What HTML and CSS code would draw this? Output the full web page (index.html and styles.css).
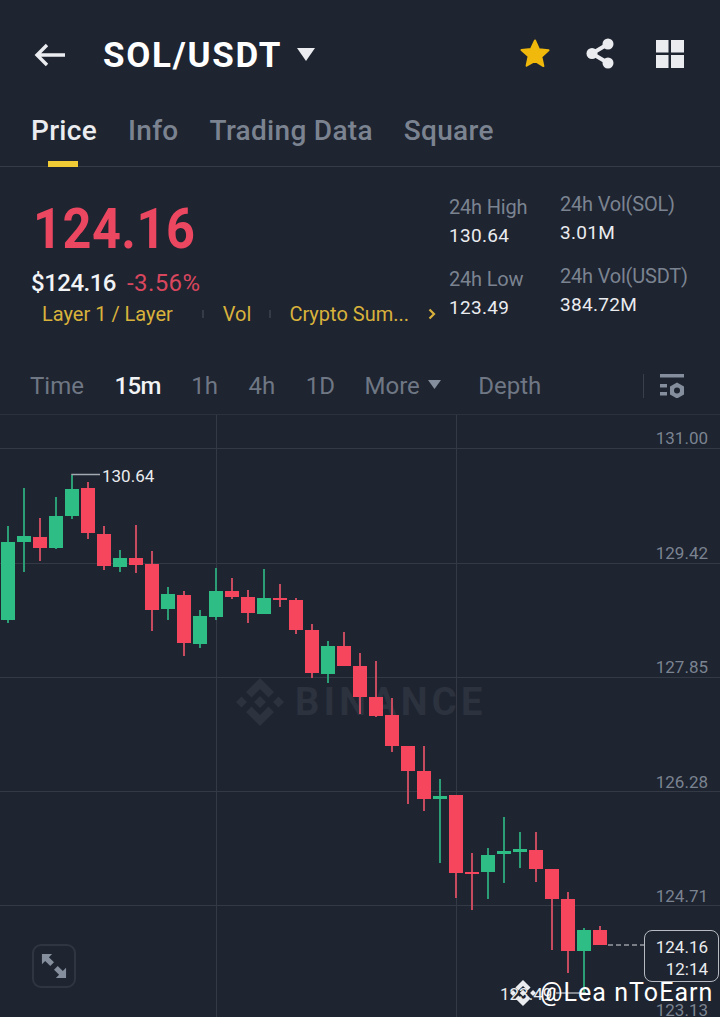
FILE: index.html
```html
<!DOCTYPE html>
<html lang="en">
<head>
  <meta charset="UTF-8">
  <title>SOL/USDT</title>
  <link rel="stylesheet" href="styles.css">
</head>
<body>

  <!-- HEADER -->
  <header class="topbar">
    <svg class="icon-back" width="32" height="24" viewBox="0 0 32 24">
      <path d="M13 2 3 12l10 10M3 12h28" fill="none" stroke="#eaecef" stroke-width="3.4"/>
    </svg>
    <h1 class="pair">SOL/USDT</h1>
    <svg class="icon-caret" width="20" height="14" viewBox="0 0 20 14">
      <path d="M1 1h18L10 14z" fill="#eaecef"/>
    </svg>
    <div class="topbar-actions">
      <svg width="32" height="32" viewBox="0 0 32 32">
        <path d="M16 2.500l4 8.800 9.500 1-7.100 6.400 2 9.400L16 22.900l-8.400 4.800 2-9.400-7.100-6.400 9.500-1z" fill="#f0b90b" stroke="#f0b90b" stroke-width="2" stroke-linejoin="round"/>
      </svg>
      <svg class="icon-share" width="30" height="32" viewBox="0 0 30 32">
        <path d="M22 6 6 15.500 22 25" fill="none" stroke="#eaecef" stroke-width="4"/>
        <circle cx="22" cy="6" r="5.500" fill="#eaecef"/>
        <circle cx="6" cy="15.500" r="5.500" fill="#eaecef"/>
        <circle cx="22" cy="25" r="5.500" fill="#eaecef"/>
      </svg>
      <svg width="28" height="28" viewBox="0 0 28 28">
        <path d="M0 0h12.500v12.500H0zM15 0h13v12.500H15zM0 15h12.500v13H0zM15 15h13v13H15z" fill="#eaecef"/>
      </svg>
    </div>
  </header>

  <!-- TABS -->
  <nav class="tabs">
    <a class="tab tab-active">Price</a>
    <a class="tab">Info</a>
    <a class="tab">Trading Data</a>
    <a class="tab">Square</a>
  </nav>

  <!-- PRICE + 24H STATS -->
  <section class="summary">
    <div class="summary-left">
      <div class="last-price">124.16</div>
      <div class="price-line">
        <span class="fiat">$124.16</span>
        <span class="change">-3.56%</span>
      </div>
      <div class="tags">
        <span class="tag">Layer 1 / Layer</span>
        <i class="tag-sep"></i>
        <span class="tag">Vol</span>
        <i class="tag-sep"></i>
        <span class="tag">Crypto Sum...</span>
        <svg class="tag-more" width="8" height="12" viewBox="0 0 8 12">
          <path d="M1.500 1.500 6 6l-4.500 4.500" fill="none" stroke="#d9b23c" stroke-width="2.200"/>
        </svg>
      </div>
    </div>
    <div class="stats stats-a">
      <div class="stat"><span class="stat-label">24h High</span><span class="stat-value">130.64</span></div>
      <div class="stat"><span class="stat-label">24h Low</span><span class="stat-value">123.49</span></div>
    </div>
    <div class="stats stats-b">
      <div class="stat"><span class="stat-label">24h Vol(SOL)</span><span class="stat-value">3.01M</span></div>
      <div class="stat"><span class="stat-label">24h Vol(USDT)</span><span class="stat-value">384.72M</span></div>
    </div>
  </section>

  <!-- INTERVALS -->
  <div class="intervals">
    <span class="interval">Time</span>
    <span class="interval interval-active">15m</span>
    <span class="interval">1h</span>
    <span class="interval">4h</span>
    <span class="interval">1D</span>
    <span class="interval interval-more">More
      <svg width="13" height="9" viewBox="0 0 13 9"><path d="M0 0h13L6.500 9z" fill="#848e9c"/></svg>
    </span>
    <span class="interval interval-depth">Depth</span>
    <i class="interval-sep"></i>
    <svg class="icon-settings" width="24" height="24" viewBox="0 0 24 24">
      <path d="M0 0h24v3.500H0zM0 10h7v3.500H0zM0 18h7v3.500H0z" fill="#848e9c"/>
      <path fill-rule="evenodd" d="M17 8.500l7 4v8l-7 4-7-4v-8zM17 13.500a3 3 0 1 0 0 6 3 3 0 0 0 0-6z" fill="#848e9c"/>
    </svg>
  </div>

  <!-- CHART -->
  <main class="chart">
    <svg class="chart-svg" width="720" height="602" viewBox="0 415 720 602">
      <defs>
        <symbol id="bnb" viewBox="-24 -24 48 48">
          <path d="M0-24 14-10l-5.500 5.500L0-13l-8.500 8.500L-14-10zM0 24l14-14-5.500-5.500L0 13l-8.500-8.500L-14 10zM-24 0l5.500-5.500L-13 0l-5.500 5.500zM24 0l-5.500-5.500L13 0l5.500 5.500zM0-6l6 6-6 6-6-6z"/>
        </symbol>
      </defs>

      <!-- grid -->
      <path class="grid" d="M0 448.500H720M0 563.500H720M0 677.500H720M0 791.500H720M0 905.500H720M216.500 415V1017M456.500 415V1017"/>

      <!-- watermark -->
      <use href="#bnb" x="236" y="678" width="48" height="48" class="mark"/>
      <text class="mark mark-text" x="295" y="715">BINANCE</text>

      <!-- price axis -->
      <text class="axis" x="708" y="444">131.00</text>
      <text class="axis" x="708" y="559">129.42</text>
      <text class="axis" x="708" y="673">127.85</text>
      <text class="axis" x="708" y="788">126.28</text>
      <text class="axis" x="708" y="902">124.71</text>
      <text class="axis" x="708" y="1016">123.13</text>

      <!-- wicks -->
      <path class="wick-up" d="M8 526V623M24 488V572M56 497V549M72 475V519M120 550V572M168 587V620M200 610V648M216 568V620M264 569V614M328 641V683M440 779V863M488 848V899M504 817V883M520 832V868M584 928V993"/>
      <path class="wick-down" d="M40 518V561M88 482V539M104 526V570M136 525V573M152 551V631M184 591V656M232 578V599M248 590V623M280 584V607M296 598V634M312 624V678M344 632V666M360 653V714M376 661V717M392 698V752M408 746V804M424 746V811M456 795V898M472 853V910M536 832V882M552 869V950M568 892V973M600 926V945"/>

      <!-- bodies -->
      <g class="up">
        <rect x="1" y="542" width="14" height="78"/>
        <rect x="17" y="536" width="14" height="6"/>
        <rect x="49" y="516" width="14" height="32"/>
        <rect x="65" y="489" width="14" height="27"/>
        <rect x="113" y="558" width="14" height="9"/>
        <rect x="161" y="594" width="14" height="15"/>
        <rect x="193" y="616" width="14" height="28"/>
        <rect x="209" y="591" width="14" height="26"/>
        <rect x="257" y="598" width="14" height="16"/>
        <rect x="321" y="646" width="14" height="28"/>
        <rect x="433" y="796" width="14" height="3"/>
        <rect x="481" y="855" width="14" height="17"/>
        <rect x="497" y="851" width="14" height="3"/>
        <rect x="513" y="849" width="14" height="3"/>
        <rect x="577" y="930" width="14" height="21"/>
      </g>
      <g class="down">
        <rect x="33" y="537" width="14" height="11"/>
        <rect x="81" y="488" width="14" height="45"/>
        <rect x="97" y="534" width="14" height="32"/>
        <rect x="129" y="558" width="14" height="7"/>
        <rect x="145" y="564" width="14" height="46"/>
        <rect x="177" y="595" width="14" height="48"/>
        <rect x="225" y="591" width="14" height="6"/>
        <rect x="241" y="597" width="14" height="16"/>
        <rect x="273" y="598" width="14" height="2"/>
        <rect x="289" y="600" width="14" height="30"/>
        <rect x="305" y="630" width="14" height="43"/>
        <rect x="337" y="646" width="14" height="20"/>
        <rect x="353" y="666" width="14" height="31"/>
        <rect x="369" y="697" width="14" height="19"/>
        <rect x="385" y="715" width="14" height="31"/>
        <rect x="401" y="746" width="14" height="25"/>
        <rect x="417" y="771" width="14" height="28"/>
        <rect x="449" y="795" width="14" height="78"/>
        <rect x="465" y="872" width="14" height="2"/>
        <rect x="529" y="850" width="14" height="19"/>
        <rect x="545" y="869" width="14" height="30"/>
        <rect x="561" y="899" width="14" height="52"/>
        <rect x="593" y="930" width="14" height="15"/>
      </g>

      <!-- high marker -->
      <path class="marker" d="M72 475V474.500H100"/>
      <text class="marker-text" x="102" y="482">130.64</text>

      <!-- low marker + last price line -->
      <path class="marker" d="M556 993H586"/>
      <text class="marker-text" x="500" y="1000">123.49</text>
      <path class="last-line" d="M608 945H644"/>
    </svg>

    <div class="price-tag">
      <span>124.16</span>
      <span>12:14</span>
    </div>

    <div class="expand">
      <svg width="26" height="26" viewBox="0 0 28 28">
        <path d="M1 1h11L8.500 4.500 14 10l-4 4-5.500-5.500L1 12zM27 27H16l3.500-3.500L14 18l4-4 5.500 5.500L27 16z" fill="#848e9c"/>
      </svg>
    </div>

    <div class="credit">
      <svg class="credit-logo" width="26" height="26"><use href="#bnb" fill="#eaecef"/></svg>
      <span>@Lea nToEarn</span>
    </div>
  </main>

</body>
</html>
```

FILE: styles.css
```css
body {
  margin: 0;
  width: 720px;
  height: 1017px;
  overflow: hidden;
  background-color: #1e2430;
  font-family: Roboto, "Liberation Sans", sans-serif;
  color: #eaecef;
}

/* header */
.topbar {
  display: flex;
  align-items: center;
  height: 110px;
  padding: 0 36px 0 34px;
  box-sizing: border-box;
}

.icon-back {
  margin-right: 37px;
}

.pair {
  margin: 0;
  font-size: 35px;
  font-weight: 700;
  letter-spacing: 1.700px;
  color: #fff;
}

.icon-caret {
  margin: -2px 0 0 14px;
}

.topbar-actions {
  display: flex;
  align-items: center;
  gap: 35px;
  margin-left: auto;
  margin-top: -2px;
}

.icon-share {
  margin-right: 5px;
}

/* tabs */
.tabs {
  display: flex;
  gap: 31px;
  height: 57px;
  padding-left: 31px;
  box-sizing: border-box;
  border-bottom: 1px solid #363c47;
}

.tab {
  position: relative;
  font-size: 28px;
  line-height: 42px;
  font-weight: 500;
  letter-spacing: 0.3px;
  color: #7b8390;
}

.tab-active {
  color: #eaecef;
}

.tab-active::after {
  content: "";
  position: absolute;
  left: 17px;
  bottom: -1px;
  width: 30px;
  height: 6px;
  background-color: #f0cb35;
}

/* summary */
.summary {
  display: flex;
  height: 193px;
}

.summary-left {
  width: 449px;
  padding-left: 31px;
  box-sizing: border-box;
}

.last-price {
  margin: 31px 0 0 2px;
  font-size: 56px;
  line-height: 62px;
  font-weight: 700;
  letter-spacing: 0.6px;
  color: #ec4760;
  transform: scaleX(0.9);
  transform-origin: left;
}

.price-line {
  display: flex;
  gap: 11px;
  margin-top: 9px;
  font-size: 24px;
  line-height: 28px;
}

.fiat {
  font-weight: 500;
  letter-spacing: -0.5px;
  color: #f2f3f5;
}

.change {
  letter-spacing: 0.4px;
  color: #d8475e;
}

.tags {
  display: flex;
  align-items: center;
  margin: 3px 0 0 11px;
  font-size: 20px;
  line-height: 28px;
  color: #d9b23c;
}

.tag-sep {
  width: 2px;
  height: 8px;
  margin: 0 19px 0 29px;
  background-color: #363c47;
}

.tag-sep + .tag + .tag-sep {
  margin: 0 18px 0 18px;
}

.tag-more {
  margin-left: 19px;
}

.stats {
  display: flex;
  flex-direction: column;
  gap: 18px;
}

.stats-a {
  width: 111px;
  padding-top: 27px;
}

.stats-b {
  padding-top: 24px;
}

.stat {
  display: flex;
  flex-direction: column;
  gap: 4px;
}

.stat-label {
  font-size: 20px;
  line-height: 26px;
  letter-spacing: -0.2px;
  color: #7b8390;
}

.stat-value {
  font-size: 19px;
  line-height: 24px;
  letter-spacing: 0.3px;
  color: #eaecef;
}

/* interval row */
.intervals {
  display: flex;
  align-items: center;
  gap: 30.500px;
  height: 55px;
  padding: 0 36px 2px 30px;
  box-sizing: border-box;
  border-bottom: 1px solid #2c323d;
}

.interval {
  font-size: 24px;
  color: #6f7784;
}

.interval-active {
  font-weight: 500;
  letter-spacing: -0.6px;
  color: #f2f3f5;
}

.interval-more {
  margin-left: -1px;
}

.interval-more svg {
  margin: 0 0 5px 2px;
}

.interval-depth {
  margin-left: 7px;
}

.interval-sep {
  width: 1px;
  height: 24px;
  margin-left: auto;
  margin-right: -14px;
  background-color: #3a404b;
}

/* chart */
.chart {
  position: relative;
  height: 602px;
  overflow: hidden;
}

.chart-svg {
  display: block;
}

.grid {
  fill: none;
  stroke: #343a45;
  stroke-width: 1;
}

.mark {
  fill: #2c323e;
}

.mark-text {
  font-size: 38px;
  font-weight: 700;
  letter-spacing: 4.400px;
}

.axis {
  font-size: 17px;
  text-anchor: end;
  fill: #7b8390;
}

.wick-up {
  fill: none;
  stroke: #2b9e76;
  stroke-width: 2;
}

.wick-down {
  fill: none;
  stroke: #c84a5f;
  stroke-width: 2;
}

.up {
  fill: #2ebd85;
}

.down {
  fill: #f6465d;
}

.marker {
  fill: none;
  stroke: #a4a9b1;
  stroke-width: 1.500;
}

.marker-text {
  font-size: 17px;
  fill: #eaecef;
}

.last-line {
  fill: none;
  stroke: #d5d7da;
  stroke-width: 1;
  stroke-dasharray: 5 3;
}

.price-tag {
  position: absolute;
  left: 644px;
  top: 515px;
  display: flex;
  flex-direction: column;
  align-items: flex-end;
  width: 75px;
  height: 52px;
  padding: 5px 10px 0 0;
  box-sizing: border-box;
  background-color: #1e2430;
  border: 1px solid #b7bbc1;
  border-radius: 8px;
  font-size: 17px;
  line-height: 22px;
  color: #eaecef;
}

.expand {
  position: absolute;
  left: 32px;
  top: 529px;
  display: flex;
  align-items: center;
  justify-content: center;
  width: 44px;
  height: 44px;
  box-sizing: border-box;
  border: 2px solid #2f3642;
  border-radius: 9px;
}

.credit {
  position: absolute;
  left: 510px;
  top: 564px;
  display: flex;
  align-items: center;
  gap: 4px;
  font-size: 25px;
  line-height: 28px;
  letter-spacing: 1.050px;
  color: #fff;
}

.credit-logo {
  display: block;
}
```
